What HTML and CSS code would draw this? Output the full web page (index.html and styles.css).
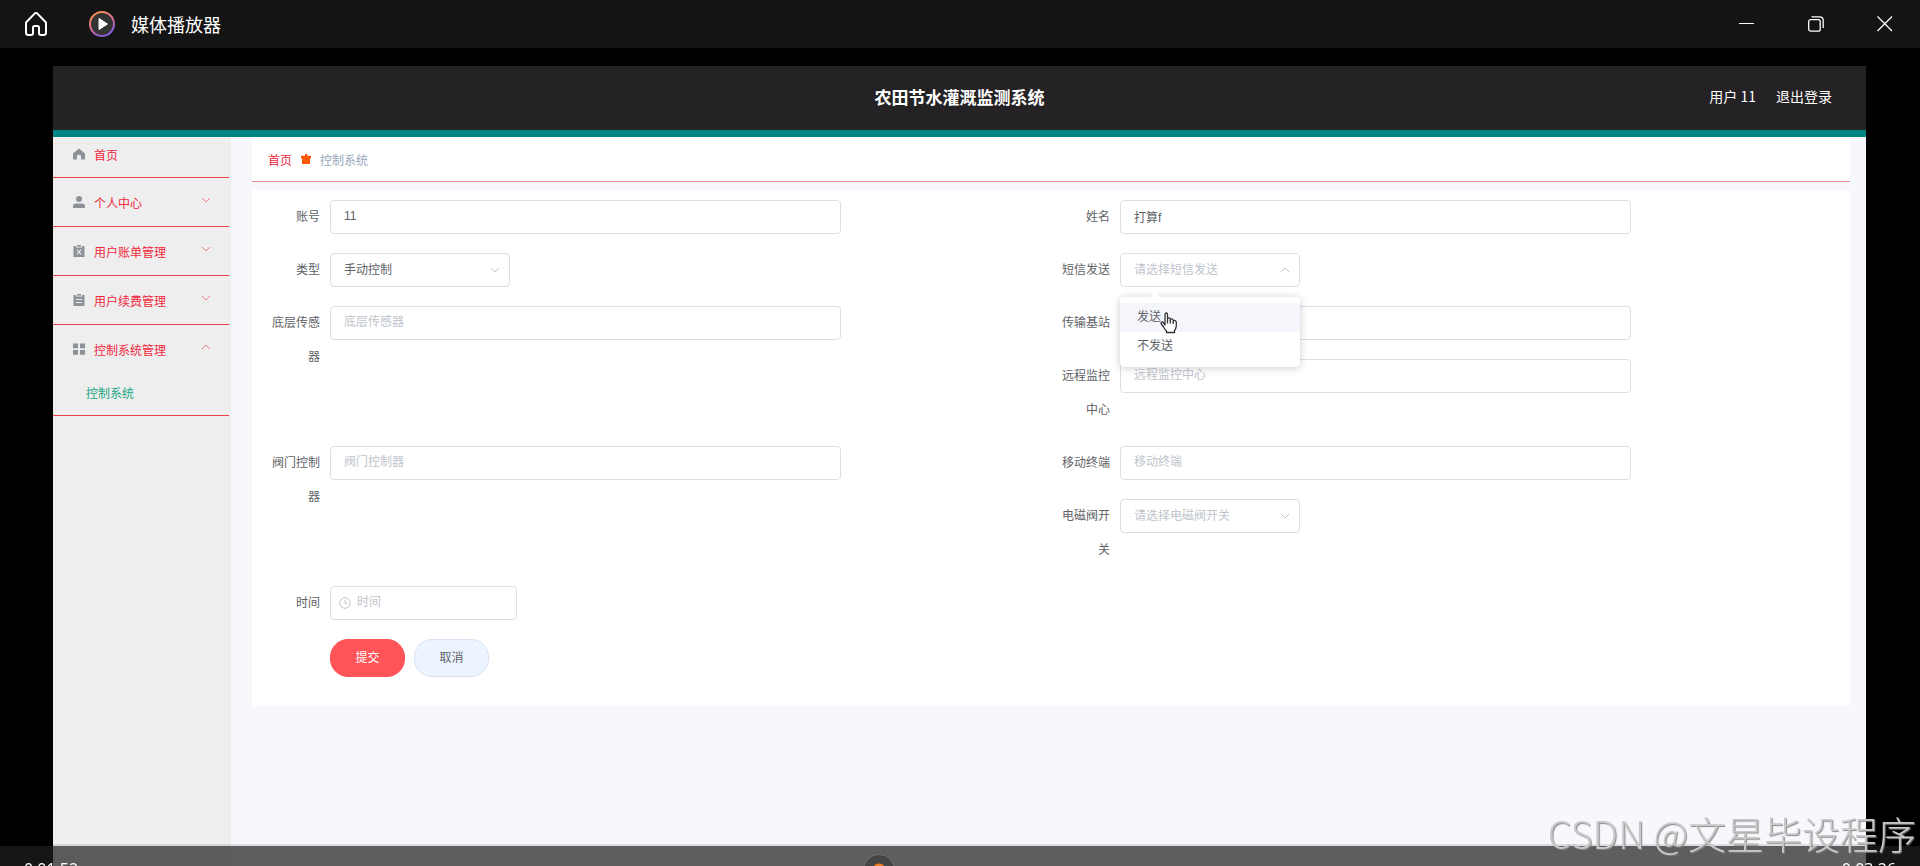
FILE: index.html
```html
<!DOCTYPE html>
<html lang="zh-CN">
<head>
  <meta charset="UTF-8">
  <meta name="viewport" content="width=device-width, initial-scale=1.0">
  <title>媒体播放器</title>
  <link rel="stylesheet" href="styles.css">
</head>
<body>
  <!-- Player title bar -->
  <div class="titlebar">
    <button class="bar-btn" aria-label="主页">
      <svg width="24" height="26" viewBox="0 0 24 26" fill="none" stroke="#fff" stroke-width="2" stroke-linejoin="round"><path d="M2 11.5 L10.6 2.6 Q12 1.4 13.4 2.6 L22 11.5 V21.5 Q22 24 19.5 24 H17 Q15 24 15 22 V16.5 Q15 15 13.5 15 H10.5 Q9 15 9 16.5 V22 Q9 24 7 24 H4.5 Q2 24 2 21.5 Z"/></svg>
    </button>
    <svg class="app-logo" width="26" height="26" viewBox="0 0 26 26">
      <defs>
        <linearGradient id="ring" x1="0" y1="0" x2="0.5" y2="1">
          <stop offset="0" stop-color="#ff9a3c"/>
          <stop offset="0.5" stop-color="#e0708a"/>
          <stop offset="1" stop-color="#8a5cd8"/>
        </linearGradient>
      </defs>
      <circle cx="13" cy="13" r="12" fill="#333" stroke="url(#ring)" stroke-width="2"/>
      <path d="M10 7.5 V18.5 L18.5 13 Z" fill="#fff" stroke="#fff" stroke-linejoin="round"/>
    </svg>
    <span class="app-name">媒体播放器</span>
    <div class="window-btns">
      <button class="bar-btn" aria-label="最小化">
        <svg width="16" height="16" viewBox="0 0 16 16"><path d="M0 7.5 H15" stroke="#fff"/></svg>
      </button>
      <button class="bar-btn" aria-label="还原">
        <svg width="16" height="16" viewBox="0 0 16 16" fill="none" stroke="#fff" stroke-width="1.3"><rect x="0.7" y="3.7" width="11.5" height="11.5" rx="2"/><path d="M3.5 0.8 H11.5 Q15.2 0.8 15.2 4.5 V12"/></svg>
      </button>
      <button class="bar-btn" aria-label="关闭">
        <svg width="16" height="16" viewBox="0 0 16 16"><path d="M0.5 0.5 L15 15 M15 0.5 L0.5 15" stroke="#fff" stroke-width="1.2"/></svg>
      </button>
    </div>
  </div>

  <div class="stage">
    <header class="header">
      <h1>农田节水灌溉监测系统</h1>
      <div class="user-info">
        <span>用户 11</span>
        <a href="#">退出登录</a>
      </div>
    </header>

    <div class="layout">
      <nav class="sidebar">
        <ul class="menu">
          <li class="menu-home">
            <a href="#">
              <svg class="menu-icon" viewBox="0 0 12 12"><path d="M6 0.5 L12 5.5 V11.5 H8 V8 Q8 6.8 6 6.8 Q4 6.8 4 8 V11.5 H0 V5.5 Z"/></svg>
              <span>首页</span>
            </a>
          </li>
          <li>
            <a href="#">
              <svg class="menu-icon" viewBox="0 0 12 12"><circle cx="6" cy="3" r="3"/><path d="M0 12 V10 Q0 7.5 3 7.5 H9 Q12 7.5 12 10 V12 Z"/></svg>
              <span>个人中心</span>
              <svg class="menu-arrow" viewBox="0 0 10 10"><path d="M1 3 L5 7 L9 3"/></svg>
            </a>
          </li>
          <li>
            <a href="#">
              <svg class="menu-icon" viewBox="0 0 12 12"><path fill-rule="evenodd" d="M0.5 1 H3 V2.6 H9 V1 H11.5 V12 H0.5 Z M3.6 5 L5.2 7 L3.6 9 L4.4 9.7 L6 7.8 L7.6 9.7 L8.4 9 L6.8 7 L8.4 5 L7.6 4.3 L6 6.2 L4.4 4.3 Z"/><rect x="4" y="0" width="4" height="1.6"/></svg>
              <span>用户账单管理</span>
              <svg class="menu-arrow" viewBox="0 0 10 10"><path d="M1 3 L5 7 L9 3"/></svg>
            </a>
          </li>
          <li>
            <a href="#">
              <svg class="menu-icon" viewBox="0 0 12 12"><path fill-rule="evenodd" d="M0.5 1 H3 V2.6 H9 V1 H11.5 V12 H0.5 Z M3 5 V6 H9 V5 Z M3 8 V9 H9 V8 Z"/><rect x="4" y="0" width="4" height="1.6"/></svg>
              <span>用户续费管理</span>
              <svg class="menu-arrow" viewBox="0 0 10 10"><path d="M1 3 L5 7 L9 3"/></svg>
            </a>
          </li>
          <li>
            <a href="#">
              <svg class="menu-icon" viewBox="0 0 12 12"><path d="M0 0.5 H5 V5.2 H0 Z M7 0.5 H12 V5.2 H7 Z M0 7 H5 V11.7 H0 Z M7 7 H12 V11.7 H7 Z"/></svg>
              <span>控制系统管理</span>
              <svg class="menu-arrow" viewBox="0 0 10 10"><path d="M1 7 L5 3 L9 7"/></svg>
            </a>
            <a href="#" class="submenu-item">控制系统</a>
          </li>
        </ul>
      </nav>

      <main class="content">
        <div class="breadcrumb">
          <a href="#">首页</a>
          <svg width="10" height="10" viewBox="0 0 10 10" fill="#ff5a0a"><path d="M4 0 H6.2 V1.8 H10 V4.6 H9 V10 H1 V4.6 H0 V1.8 H4 Z"/></svg>
          <span>控制系统</span>
        </div>

        <form class="form-card">
          <div class="form-item">
            <label for="account">账号</label>
            <input type="text" id="account" value="11">
          </div>
          <div class="form-item">
            <label for="name">姓名</label>
            <input type="text" id="name" value="打算f">
          </div>
          <div class="form-item">
            <label for="type">类型</label>
            <div class="select-box">
              <select id="type">
                <option>手动控制</option>
              </select>
              <svg class="select-arrow" viewBox="0 0 10 10"><path d="M1 3 L5 7 L9 3"/></svg>
            </div>
          </div>
          <div class="form-item">
            <label for="sms">短信发送</label>
            <div class="select-box">
              <select id="sms" class="empty">
                <option>请选择短信发送</option>
              </select>
              <svg class="select-arrow" viewBox="0 0 10 10"><path d="M1 7 L5 3 L9 7"/></svg>
              <ul class="dropdown">
                <li class="hover">发送</li>
                <li>不发送</li>
              </ul>
              <svg class="cursor" width="18" height="22" viewBox="0 0 18 22" fill="#fff" stroke="#333" stroke-width="1.3" stroke-linejoin="round"><path d="M5 13 V2.5 Q5 1 6.3 1 Q7.5 1 7.5 2.5 V8 V6.5 Q9 5.2 10.3 6.8 V8.5 V7.3 Q12 6.2 13.2 8 V9.5 V8.5 Q15.5 7.8 16.3 10 V14 Q16 17 14.5 18.5 V20.5 H6.5 V19 Q4.5 17 3.5 15 L1 11.5 Q1 9.5 3 10.2 Z"/><path d="M7.5 8 V11.5 M10.3 8.5 V11.5 M13.2 9.5 V12" fill="none"/></svg>
            </div>
          </div>
          <div class="form-item tall">
            <label for="sensor">底层传感器</label>
            <input type="text" id="sensor" placeholder="底层传感器">
          </div>
          <div class="form-item">
            <label for="station">传输基站</label>
            <input type="text" id="station" placeholder="传输基站">
          </div>
          <div class="form-item">
            <label for="remote">远程监控中心</label>
            <input type="text" id="remote" placeholder="远程监控中心">
          </div>
          <div class="form-item tall">
            <label for="valve">阀门控制器</label>
            <input type="text" id="valve" placeholder="阀门控制器">
          </div>
          <div class="form-item">
            <label for="mobile">移动终端</label>
            <input type="text" id="mobile" placeholder="移动终端">
          </div>
          <div class="form-item">
            <label for="solenoid">电磁阀开关</label>
            <div class="select-box">
              <select id="solenoid" class="empty">
                <option>请选择电磁阀开关</option>
              </select>
              <svg class="select-arrow" viewBox="0 0 10 10"><path d="M1 3 L5 7 L9 3"/></svg>
            </div>
          </div>
          <div class="form-item">
            <label for="time">时间</label>
            <div class="date-box">
              <svg class="clock" viewBox="0 0 12 12"><circle cx="6" cy="6" r="5.3"/><path d="M6 2.8 V6.3 H8.8"/></svg>
              <input type="text" id="time" placeholder="时间">
            </div>
          </div>
          <div class="form-actions">
            <button type="button" class="btn btn-submit">提交</button>
            <button type="button" class="btn btn-cancel">取消</button>
          </div>
        </form>
      </main>
    </div>
  </div>

  <!-- Playback controls, peeking in from the bottom edge -->
  <div class="player-controls">
    <input type="range" class="seek" min="0" max="1000" value="456" aria-label="播放进度">
    <div class="times">
      <span>0:01:52</span>
      <span>0:03:26</span>
    </div>
  </div>
  <div class="watermark">CSDN @文星毕设程序</div>
</body>
</html>
```
FILE: styles.css
```css
/* General Styles */
* {
  box-sizing: border-box;
}

body {
  margin: 0;
  background-color: #000;
  color: #606266;
  font-family: "Liberation Sans", "Noto Sans CJK SC", sans-serif;
  font-size: 12px;
}

a {
  text-decoration: none;
}

ul {
  list-style: none;
  margin: 0;
  padding: 0;
}

input, select, button {
  font-family: inherit;
  font-size: 12px;
}

/* Title bar */
.titlebar {
  display: flex;
  align-items: center;
  height: 48px;
  padding: 0 27px 0 24px;
  background-color: #141414;
  color: #fff;
}

.bar-btn {
  display: flex;
  padding: 0;
  border: none;
  background: none;
}

.app-logo {
  margin: 0 16px 0 41px;
}

.app-name {
  font-size: 18px;
}

.window-btns {
  display: flex;
  gap: 53px;
  margin-left: auto;
}

/* Video area */
.stage {
  display: flex;
  flex-direction: column;
  min-height: calc(100vh - 66px);
  margin: 18px 54px 0 53px;
  background-color: #f6f8fc;
}

.header {
  display: grid;
  grid-template-columns: 1fr auto 1fr;
  align-items: center;
  height: 71px;
  padding: 0 34px 4px;
  border-bottom: 7px solid #008584;
  background-color: #242224;
  color: #fff;
}

.header h1 {
  grid-column: 2;
  margin: 0;
  font-size: 17px;
}

.user-info {
  display: flex;
  justify-content: flex-end;
  gap: 20px;
  font-family: "Noto Sans CJK SC", sans-serif;
  font-size: 14px;
}

.user-info a {
  color: #fff;
}

.layout {
  display: flex;
  flex: 1;
}

/* Sidebar */
.sidebar {
  width: 178px;
  padding-right: 2px;
  background-color: #eeeeef;
}

.menu li {
  border-bottom: 1px solid #ea4048;
}

.menu a {
  display: flex;
  align-items: center;
  height: 48px;
  padding: 0 18px 0 20px;
  color: #f0283c;
}

.menu .menu-home a {
  height: 40px;
  padding-bottom: 6px;
}

.menu-icon {
  width: 12px;
  height: 12px;
  margin-right: 9px;
  fill: #8d9298;
}

.menu-arrow {
  width: 10px;
  height: 10px;
  margin: 0 0 4px auto;
  fill: none;
  stroke: #f08088;
}

.menu .submenu-item {
  height: 42px;
  padding: 0 0 4px 33px;
  color: #1ba784;
}

/* Content */
.content {
  flex: 1;
  padding: 0 16px 0 21px;
}

.breadcrumb {
  display: flex;
  align-items: center;
  gap: 9px;
  height: 45px;
  padding-left: 16px;
  border-bottom: 1px solid #e8848a;
  background-color: #fff;
  color: #97a8be;
}

.breadcrumb a {
  color: #f0283c;
}

.form-card {
  display: grid;
  grid-template-columns: 1fr 1fr;
  row-gap: 19px;
  margin-top: 8px;
  padding: 10px 9px 29px;
  background-color: #fff;
}

.form-item {
  display: flex;
  align-items: flex-start;
  padding-right: 210px;
}

.form-item.tall {
  grid-row: span 2;
}

.form-item label {
  flex: none;
  width: 69px;
  padding-right: 10px;
  line-height: 34px;
  text-align: right;
}

.form-item > input {
  flex: 1;
}

.form-item input,
.form-item select {
  height: 34px;
  padding: 0 13px 2px;
  border: 1px solid #dcdfe6;
  border-radius: 4px;
  background-color: #fff;
  color: #606266;
  outline: none;
}

.form-item input::placeholder,
.form-item select.empty {
  color: #c0c4cc;
}

.select-box,
.date-box {
  position: relative;
  width: 180px;
}

.form-item select {
  width: 100%;
  padding-bottom: 0;
  appearance: none;
}

.select-arrow {
  position: absolute;
  top: 12px;
  right: 10px;
  width: 10px;
  height: 10px;
  fill: none;
  stroke: #c0c4cc;
}

.date-box {
  width: 187px;
}

.form-item .date-box input {
  width: 100%;
  padding-left: 26px;
}

.clock {
  position: absolute;
  top: 11px;
  left: 9px;
  width: 12px;
  height: 12px;
  fill: none;
  stroke: #c0c4cc;
}

/* Open select menu */
.dropdown {
  position: absolute;
  top: 44px;
  left: 0;
  z-index: 2;
  width: 100%;
  padding: 6px 0;
  border-radius: 4px;
  background-color: #fff;
  box-shadow: 0 1px 8px rgba(0, 0, 0, 0.2);
}

.dropdown::before {
  content: "";
  position: absolute;
  top: -5px;
  left: 30px;
  border: 5px solid transparent;
  border-top: none;
  border-bottom-color: #fff;
}

.dropdown li {
  padding-left: 17px;
  line-height: 29px;
}

.dropdown li.hover {
  background-color: #f5f6fc;
}

.cursor {
  position: absolute;
  top: 59px;
  left: 40px;
  z-index: 3;
}

.form-actions {
  grid-column: 1 / -1;
  display: flex;
  gap: 9px;
  padding-left: 69px;
}

.btn {
  width: 75px;
  height: 38px;
  padding: 0 0 4px;
  border: 1px solid #ff5458;
  border-radius: 18px;
  background-color: #ff5458;
  color: #fff;
}

.btn-cancel {
  border-color: #d9e1f0;
  background-color: #ecf5ff;
  color: #606266;
}

/* Player controls */
.player-controls {
  position: fixed;
  right: 0;
  bottom: 0;
  left: 0;
  z-index: 4;
  height: 22px;
  padding: 0 24px;
  border-top: 2px solid rgba(0, 0, 0, 0.1);
  background-color: rgba(31, 31, 31, 0.71);
  background-clip: padding-box;
  color: #fff;
  overflow: hidden;
}

.seek {
  display: block;
  width: 100%;
  height: 32px;
  margin: 8px 0 0;
  background: none;
  appearance: none;
}

.seek::-webkit-slider-thumb {
  width: 32px;
  height: 32px;
  border: 1px solid #6e6e6e;
  border-radius: 50%;
  background: radial-gradient(circle, #f07c28 6px, #454545 7px);
  appearance: none;
}

.times {
  display: flex;
  justify-content: space-between;
  margin-top: -28px;
  font-family: "Open Sans", sans-serif;
  font-size: 16px;
}

.watermark {
  position: fixed;
  right: 4px;
  bottom: 9px;
  z-index: 5;
  color: #c9c9c9;
  font-family: "Noto Sans CJK SC", sans-serif;
  font-size: 38px;
  font-weight: 300;
  line-height: 48px;
  text-shadow: 1px 1px 1px #888;
}
```
